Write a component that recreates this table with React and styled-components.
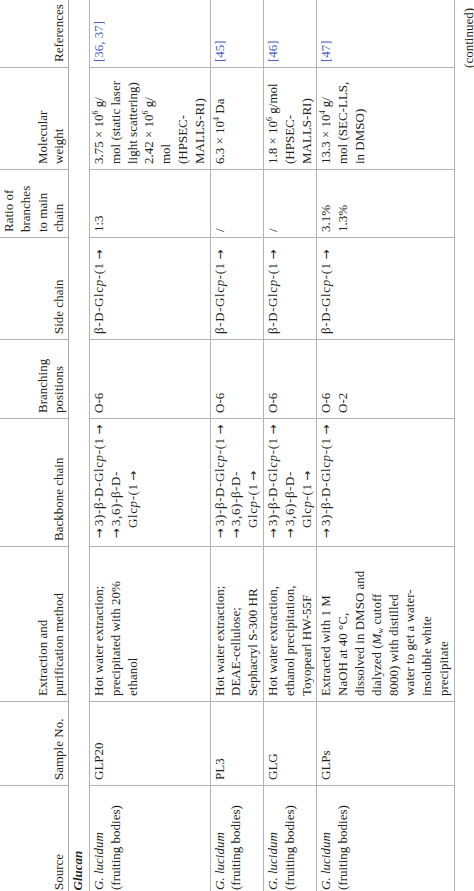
import React from "react";
import styled, { createGlobalStyle } from "styled-components";

const GlobalStyle = createGlobalStyle`
  html, body {
    margin: 0;
    padding: 0;
    background: #ffffff;
  }
  body {
    font-family: "Liberation Serif", "DejaVu Serif", serif;
    color: #231f20;
  }
`;

const Page = styled.div`
  width: 474px;
  height: 891px;
  overflow: hidden;
  background: #fff;
`;

// the printed table is set sideways, so the whole sheet is turned a quarter
const Sheet = styled.div`
  width: 898px;
  height: 474px;
  transform-origin: 0 0;
  transform: translateY(896px) rotate(-90deg);
  font-size: 13px;
  line-height: 16.8px;
`;

const Table = styled.table`
  width: 898px;
  table-layout: fixed;
  border-collapse: collapse;
`;

const HeadCell = styled.th`
  font-weight: normal;
  text-align: left;
  vertical-align: bottom;
  padding: 1px 5px 0;
  border-left: 1px solid #b4b4b4;
  border-right: 1px solid #b4b4b4;
  border-bottom: 1.5px solid #a9a9a9;
  white-space: nowrap;
`;

const GroupCell = styled.td`
  padding: 1px 5px 2px;
  font-weight: bold;
  font-style: italic;
  border-bottom: 1px solid #b4b4b4;
`;

const Cell = styled.td`
  vertical-align: top;
  padding: 1px 5px 1px;
  border: 1px solid #b4b4b4;
  border-top: none;
  white-space: nowrap;
`;

const Line = styled.span`
  display: block;
  padding-left: ${(p) => (p.$indent ? "13px" : "0")};
`;

// sugar linkages are set a little looser than the running text
const Chem = styled.span`
  letter-spacing: 0.6px;
`;

const Arrow = styled.span`
  display: inline-block;
  width: 15px;
  text-align: center;
  font-family: "DejaVu Sans", sans-serif;
  font-size: 12px;
  letter-spacing: 0;
`;

const Ref = styled.span`
  color: #4a5ec6;
`;

const Sup = styled.sup`
  font-size: 8px;
  line-height: 0;
  vertical-align: 5px;
`;

const Sub = styled.sub`
  font-size: 8px;
  line-height: 0;
  vertical-align: -2px;
`;

const Continued = styled.div`
  display: flex;
  justify-content: flex-end;
  padding-top: 6px;
  padding-right: 10px;
`;

const widths = [110, 84, 155, 128, 79, 102, 68, 102, 70];

const Lines = ({ items }) =>
  items.map((t, i) =>
    typeof t === "object" && t && t.indent ? (
      <Line key={i} $indent>
        {t.text}
      </Line>
    ) : (
      <Line key={i}>{t}</Line>
    )
  );

const ar = <Arrow>→</Arrow>;

const glcp = (
  <>
    Glc<i>p</i>
  </>
);

const side = (
  <Chem>
    β-D-{glcp}-(1{ar}
  </Chem>
);

const mainLink = (
  <Chem>
    {ar}3)-β-D-{glcp}-(1{ar}
  </Chem>
);

const backbone = [
  mainLink,
  <Chem>{ar}3,6)-β-D-</Chem>,
  {
    indent: true,
    text: (
      <Chem>
        {glcp}-(1{ar}
      </Chem>
    ),
  },
];

const source = [<i>G. lucidum</i>, "(fruiting bodies)"];

const rows = [
  {
    cells: [
      source,
      ["GLP20"],
      ["Hot water extraction;", "precipitated with 20%", "ethanol"],
      backbone,
      ["O-6"],
      [side],
      ["1:3"],
      [
        <>3.75 × 10<Sup>6</Sup> g/</>,
        "mol (static laser",
        "light scattering)",
        <>2.42 × 10<Sup>6</Sup> g/</>,
        "mol",
        "(HPSEC-",
        "MALLS-RI)",
      ],
    ],
    refs: "[36, 37]",
  },
  {
    cells: [
      source,
      ["PL3"],
      ["Hot water extraction;", "DEAE-cellulose;", "Sephacryl S-300 HR"],
      backbone,
      ["O-6"],
      [side],
      ["/"],
      [<>6.3 × 10<Sup>4</Sup> Da</>],
    ],
    refs: "[45]",
  },
  {
    cells: [
      source,
      ["GLG"],
      ["Hot water extraction,", "ethanol precipitation,", "Toyopearl HW-55F"],
      backbone,
      ["O-6"],
      [side],
      ["/"],
      [<>1.8 × 10<Sup>6</Sup> g/mol</>, "(HPSEC-", "MALLS-RI)"],
    ],
    refs: "[46]",
  },
  {
    cells: [
      source,
      ["GLPs"],
      [
        "Extracted with 1 M",
        "NaOH at 40 °C,",
        "dissolved in DMSO and",
        <>
          dialyzed (<i>M</i>
          <Sub>w</Sub> cutoff
        </>,
        "8000) with distilled",
        "water to get a water-",
        "insoluble white",
        "precipitate",
      ],
      [mainLink],
      ["O-6", "O-2"],
      [side],
      ["3.1%", "1.3%"],
      [<>13.3 × 10<Sup>4</Sup> g/</>, "mol (SEC-LLS,", "in DMSO)"],
    ],
    refs: "[47]",
  },
];

const headers = [
  ["Source"],
  ["Sample No."],
  ["Extraction and", "purification method"],
  ["Backbone chain"],
  ["Branching", "positions"],
  ["Side chain"],
  ["Ratio of", "branches", "to main", "chain"],
  ["Molecular", "weight"],
  ["References"],
];

const App = () => {
  return (
    <Page>
      <GlobalStyle />
      <Sheet>
        <Table>
          <colgroup>
            {widths.map((w, i) => (
              <col key={i} style={{ width: w }} />
            ))}
          </colgroup>
          <thead>
            <tr>
              {headers.map((h, i) => (
                <HeadCell key={i}>
                  <Lines items={h} />
                </HeadCell>
              ))}
            </tr>
          </thead>
          <tbody>
            <tr>
              <GroupCell colSpan={9}>Glucan</GroupCell>
            </tr>
            {rows.map((r, i) => (
              <tr key={i}>
                {r.cells.map((c, j) => (
                  <Cell key={j}>
                    <Lines items={c} />
                  </Cell>
                ))}
                <Cell>
                  <Ref>{r.refs}</Ref>
                </Cell>
              </tr>
            ))}
          </tbody>
        </Table>
        <Continued>
          <span>(continued)</span>
        </Continued>
      </Sheet>
    </Page>
  );
};

export default App;
